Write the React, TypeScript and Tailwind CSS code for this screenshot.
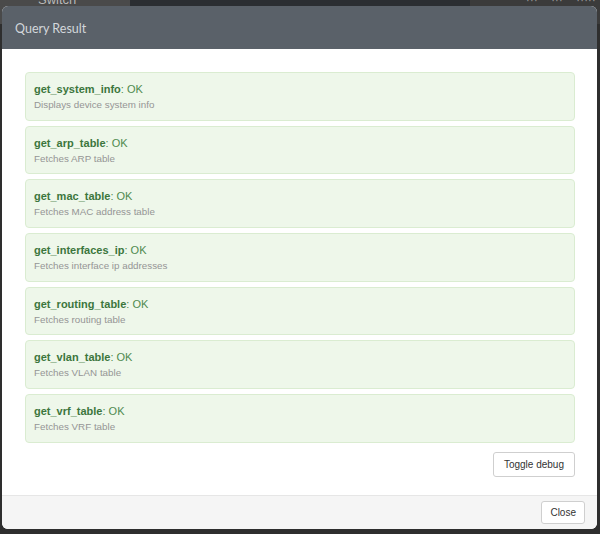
import React from "react";

const items = [
  { name: "get_system_info", desc: "Displays device system info" },
  { name: "get_arp_table", desc: "Fetches ARP table" },
  { name: "get_mac_table", desc: "Fetches MAC address table" },
  { name: "get_interfaces_ip", desc: "Fetches interface ip addresses" },
  { name: "get_routing_table", desc: "Fetches routing table" },
  { name: "get_vlan_table", desc: "Fetches VLAN table" },
  { name: "get_vrf_table", desc: "Fetches VRF table" },
];

export default function App() {
  return (
    <div
      className="relative w-[600px] h-[534px] overflow-hidden bg-[#2e2e2e]"
      style={{ fontFamily: '"Liberation Sans", Arial, sans-serif' }}
    >
      {/* page behind the modal */}
      <div className="flex h-[24px]">
        <div className="w-[130px] bg-[#4a4a4a] relative overflow-hidden">
          <span className="absolute left-[38px] top-[-8px] text-[13px] leading-[16px] text-[#b8b8b8]">Switch</span>
        </div>
        <div className="w-[340px] bg-[#2b2e32]" />
        <div className="flex-1 bg-[#3b3b3b] relative overflow-hidden">
          <span className="absolute left-[56px] top-[-7px] text-[11px] leading-[14px] text-[#9a9a9a] tracking-wide">
            ···&nbsp;&nbsp;&nbsp;&nbsp;···&nbsp;&nbsp;&nbsp;&nbsp;·····
          </span>
        </div>
      </div>

      {/* modal */}
      <div className="absolute left-[2px] top-[6px] w-[595px] h-[523px] rounded-[6px] overflow-hidden bg-white flex flex-col">
        <div className="h-[43px] shrink-0 bg-[#5a6169] flex items-center px-[13px] pt-[3px]">
          <span
            className="text-[12.5px] text-[#d3d7db]"
            style={{ fontFamily: 'Lato, "Open Sans", sans-serif', fontWeight: 400 }}
          >
            Query Result
          </span>
        </div>

        <div className="flex-1 flex flex-col px-[23px] pr-[22px] pt-[23px]">
          <div className="flex flex-col gap-[5px]">
            {items.map((it) => (
              <div
                key={it.name}
                className="h-[48.7px] rounded-[4px] border border-[#daecd1] bg-[#eef7ea] px-[8px] pt-[9px]"
              >
                <div className="text-[11px] leading-[14px] text-[#3c763d]">
                  <span className="font-bold">{it.name}</span>
                  <span className="text-[#4f8a4e]">: OK</span>
                </div>
                <div className="mt-[2px] text-[9.8px] leading-[13px] text-[#959595]">{it.desc}</div>
              </div>
            ))}
          </div>
          <div className="flex justify-end mt-[9px]">
            <button className="h-[25px] px-[10px] rounded-[3px] border border-[#cfcfcf] bg-white text-[10px] text-[#333]">
              Toggle debug
            </button>
          </div>
        </div>

        <div className="h-[34px] shrink-0 border-t border-[#e6e6e6] bg-[#f5f5f5] flex items-start justify-end pt-[5px] pr-[12px]">
          <button className="h-[23px] px-[8px] rounded-[3px] border border-[#cfcfcf] bg-white text-[10px] text-[#333]">
            Close
          </button>
        </div>
      </div>
    </div>
  );
}
